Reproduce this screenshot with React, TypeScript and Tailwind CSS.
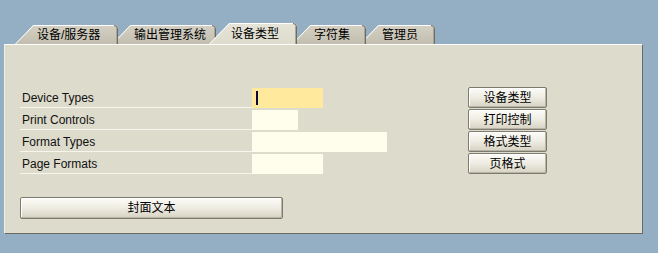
import React from 'react'

const FONT = "font-['Liberation_Sans','Noto_Sans_CJK_SC',sans-serif]"

interface TabDef {
  label: string
  width: number
  ml: string
  z: string
  active?: boolean
}

const TABS: TabDef[] = [
  { label: '设备/服务器', width: 103, ml: 'ml-[15px]', z: 'z-[5]' },
  { label: '输出管理系统', width: 104, ml: 'ml-[-6px]', z: 'z-[4]' },
  { label: '设备类型', width: 88, ml: 'ml-[-7px]', z: 'z-[10]', active: true },
  { label: '字符集', width: 74, ml: 'ml-[-5px]', z: 'z-[3]' },
  { label: '管理员', width: 75, ml: 'ml-[-6px]', z: 'z-[2]' },
]

const ROWS = [
  { label: 'Device Types', width: 'w-[71px]', focus: true },
  { label: 'Print Controls', width: 'w-[46px]' },
  { label: 'Format Types', width: 'w-[135px]' },
  { label: 'Page Formats', width: 'w-[71px]' },
]

const BUTTONS = ['设备类型', '打印控制', '格式类型', '页格式']

function Tab({ tab, idx }: { tab: TabDef; idx: number }) {
  const h = tab.active ? 21 : 19
  const w = tab.width
  const s = h - 1
  const id = `tabgrad${idx}`
  return (
    <div className={`relative shrink-0 ${tab.ml} ${tab.z}`} style={{ width: w, height: h }}>
      <svg className="absolute inset-0" width={w} height={h}>
        <defs>
          <linearGradient id={id} x1="0" y1="0" x2="0" y2="1">
            {tab.active ? (
              <>
                <stop offset="0" stopColor="#e6e4d8" />
                <stop offset="1" stopColor="#dddbcc" />
              </>
            ) : (
              <>
                <stop offset="0" stopColor="#d4d1c4" />
                <stop offset="1" stopColor="#c2beaf" />
              </>
            )}
          </linearGradient>
        </defs>
        <path
          d={`M0 ${h} L${s} 0 L${w - 4} 0 Q${w} 0 ${w} 4 L${w} ${h} Z`}
          fill={`url(#${id})`}
        />
        <path d={`M0.5 ${h} L${s + 0.5} 0.5 L${w - 4} 0.5`} fill="none" stroke="#ffffff" strokeWidth="1" />
        <path d={`M${w - 4} 0.5 Q${w - 0.5} 0.5 ${w - 0.5} 4 L${w - 0.5} ${h}`} fill="none" stroke="#6e6c62" strokeWidth="1" />
        <path d={`M${w - 1.5} 3 L${w - 1.5} ${h}`} fill="none" stroke="#a9a698" strokeWidth="1" />
      </svg>
      <div className="relative flex h-full items-center pl-[22px] text-[12px] leading-none text-black">
        {tab.label}
      </div>
    </div>
  )
}

function SapButton({ label, className }: { label: string; className: string }) {
  return (
    <div
      className={`flex items-center justify-center rounded-[2px] border border-[#7d7b6f] bg-gradient-to-b from-[#fcfcf8] via-[#eeece2] to-[#d6d3c3] text-[12px] leading-none text-black shadow-[inset_-1px_-1px_0_#b8b5a6,inset_1px_1px_0_#ffffff] ${className}`}
    >
      {label}
    </div>
  )
}

export default function App() {
  return (
    <div className={`h-[253px] w-[658px] overflow-hidden bg-[#94aec3] ${FONT}`}>
      {/* tabs */}
      <div className="flex h-[44px] items-end">
        {TABS.map((t, i) => (
          <Tab key={t.label} tab={t} idx={i} />
        ))}
      </div>

      {/* panel */}
      <div className="relative z-[1] ml-[4px] h-[190px] w-[639px] border-t border-l border-t-white border-l-[#f0efe6] border-r border-b border-r-[#6b6a62] border-b-[#6b6a62] bg-[#dddbcc]">
        <div className="flex pt-[41px] pl-[15px]">
          <div className="flex w-[448px] flex-col">
            {ROWS.map((r) => (
              <div key={r.label} className="flex h-[22px] items-end">
                <div className="flex h-full w-[232px] items-center border-b border-[#f6f5ee] pt-[2px] pl-[2px] text-[12px] text-[#111]">
                  {r.label}
                </div>
                <div
                  className={`flex h-[20px] items-center ${r.width} ${r.focus ? 'bg-[#ffe99c]' : 'bg-[#fffeed]'}`}
                >
                  {r.focus && <span className="ml-[4px] h-[14px] w-[2px] bg-[#0a0a3a]" />}
                </div>
              </div>
            ))}
          </div>
          <div className="mt-[1px] flex flex-col gap-[1px]">
            {BUTTONS.map((b) => (
              <SapButton key={b} label={b} className="h-[21px] w-[79px]" />
            ))}
          </div>
        </div>
        <div className="mt-[23px] ml-[15px]">
          <SapButton label="封面文本" className="h-[22px] w-[263px]" />
        </div>
      </div>
    </div>
  )
}
